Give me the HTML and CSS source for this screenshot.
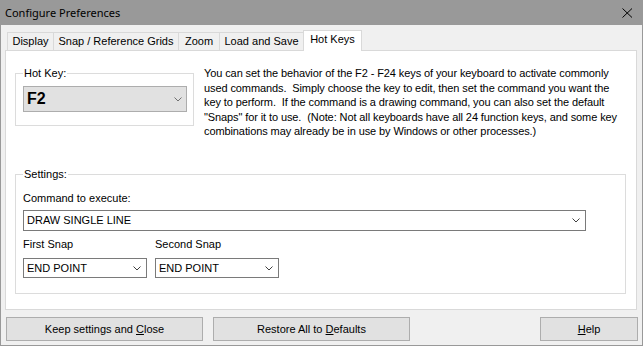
FILE: index.html
```html
<!DOCTYPE html>
<html>
<head>
<meta charset="utf-8">
<title>Configure Preferences</title>
<link rel="stylesheet" href="styles.css">
</head>
<body>
<div class="window">
  <div class="titlebar">
    <span class="title">Configure Preferences</span>
    <svg class="close" width="11" height="10" viewBox="0 0 11 10"><path d="M0.5 0.5L10 9.5M10 0.5L0.5 9.5" stroke="#000" stroke-width="1" fill="none"/></svg>
  </div>
  <div class="content">
    <div class="tabs">
      <div class="tab tab-display">Display</div>
      <div class="tab tab-snap">Snap / Reference Grids</div>
      <div class="tab tab-zoom">Zoom</div>
      <div class="tab tab-load">Load and Save</div>
      <div class="tab tab-hot active">Hot Keys</div>
    </div>
    <div class="panel">
      <div class="top-row">
        <div class="group hotkey-group">
          <div class="group-label">Hot Key:</div>
          <div class="combo combo-hotkey">
            <span class="hotkey-value">F2</span>
            <svg class="chev" width="8" height="5" viewBox="0 0 8 5"><polyline points="0.5,0.5 4,4 7.5,0.5" fill="none" stroke="#707070" stroke-width="1"/></svg>
          </div>
        </div>
        <p class="desc">You can set the behavior of the F2 - F24 keys of your keyboard to activate commonly<br>used commands.&nbsp; Simply choose the key to edit, then set the command you want the<br>key to perform.&nbsp; If the command is a drawing command, you can also set the default<br>"Snaps" for it to use.&nbsp; (Note: Not all keyboards have all 24 function keys, and some key<br>combinations may already be in use by Windows or other processes.)</p>
      </div>
      <div class="group settings-group">
        <div class="group-label">Settings:</div>
        <div class="field-label cmd-label">Command to execute:</div>
        <div class="combo combo-white combo-cmd">
          <span>DRAW SINGLE LINE</span>
          <svg class="chev" width="8" height="5" viewBox="0 0 8 5"><polyline points="0.5,0.5 4,4 7.5,0.5" fill="none" stroke="#404040" stroke-width="1"/></svg>
        </div>
        <div class="snap-row">
          <div class="snap-col">
            <div class="field-label">First Snap</div>
            <div class="combo combo-white combo-snap">
              <span>END POINT</span>
              <svg class="chev" width="8" height="5" viewBox="0 0 8 5"><polyline points="0.5,0.5 4,4 7.5,0.5" fill="none" stroke="#404040" stroke-width="1"/></svg>
            </div>
          </div>
          <div class="snap-col">
            <div class="field-label">Second Snap</div>
            <div class="combo combo-white combo-snap">
              <span>END POINT</span>
              <svg class="chev" width="8" height="5" viewBox="0 0 8 5"><polyline points="0.5,0.5 4,4 7.5,0.5" fill="none" stroke="#404040" stroke-width="1"/></svg>
            </div>
          </div>
        </div>
      </div>
    </div>
    <div class="buttons">
      <button class="btn btn-keep">Keep settings and <u>C</u>lose</button>
      <button class="btn btn-restore">Restore All to <u>D</u>efaults</button>
      <button class="btn btn-help"><u>H</u>elp</button>
    </div>
  </div>
</div>
</body>
</html>
```
FILE: styles.css
```css
* { box-sizing: border-box; }
html, body { margin: 0; padding: 0; }
body {
  width: 643px;
  height: 346px;
  overflow: hidden;
  background: #f0f0f0;
  font-family: "Liberation Sans", Arial, sans-serif;
  font-size: 11px;
  color: #000;
}
.window {
  width: 643px;
  height: 346px;
  border: 1px solid #999;
  border-top: 0;
  display: flex;
  flex-direction: column;
}
.titlebar {
  height: 25px;
  margin: 0 -1px;
  padding: 0 10px 0 5px;
  background: #999;
  display: flex;
  align-items: center;
  justify-content: space-between;
}
.title {
  font-family: "Noto Sans", "Open Sans", sans-serif;
  font-size: 11px;
  line-height: 16px;
}
.close { display: block; }
.content {
  flex: 1;
  display: flex;
  flex-direction: column;
}
.tabs {
  height: 25px;
  display: flex;
  align-items: flex-end;
  padding-left: 6px;
}
.tab {
  height: 18px;
  border: 1px solid #d9d9d9;
  border-bottom: 0;
  margin-left: -1px;
  line-height: 16px;
  text-align: center;
  white-space: nowrap;
  background: #f0f0f0;
}
.tab:first-child { margin-left: 0; }
.tab-display { width: 47px; }
.tab-snap { width: 126px; }
.tab-zoom { width: 42px; }
.tab-load { width: 85px; }
.tab-hot { width: 59px; }
.tab.active {
  height: 21px;
  margin-bottom: -1px;
  background: #fff;
  position: relative;
  z-index: 1;
}
.panel {
  margin-left: 4px;
  width: 632px;
  height: 260px;
  background: #fff;
  border: 1px solid #d9d9d9;
}
.top-row {
  height: 123px;
  display: flex;
  align-items: flex-start;
}
.group {
  border: 1px solid #dcdcdc;
  padding: 0 0 0 7px;
  margin-left: 9px;
}
.group-label {
  width: max-content;
  height: 13px;
  margin-top: -7px;
  padding: 0 1px;
  background: #fff;
  line-height: 13px;
}
.hotkey-group {
  margin-top: 22px;
  width: 179px;
  height: 53px;
  flex: none;
}
.combo {
  display: flex;
  align-items: center;
  justify-content: space-between;
}
.chev { display: block; flex: none; }
.combo-hotkey {
  margin-top: 6px;
  width: 164px;
  height: 26px;
  background: #e1e1e1;
  border: 1px solid #adadad;
  padding: 0 4px 0 3px;
}
.hotkey-value {
  font-weight: bold;
  font-size: 16px;
  line-height: 20px;
}
.desc {
  margin: 15px 0 0 10px;
  line-height: 14.5px;
  letter-spacing: -0.1px;
  white-space: nowrap;
}
.settings-group {
  width: 611px;
  height: 120px;
}
.field-label {
  height: 13px;
  line-height: 13px;
}
.cmd-label { margin-top: 11px; }
.combo-white {
  background: #fff;
  border: 1px solid #7a7a7a;
  padding: 0 5px 0 3px;
  line-height: 13px;
}
.combo-cmd {
  margin-top: 5px;
  width: 563px;
  height: 21px;
}
.snap-row {
  margin-top: 7px;
  display: grid;
  grid-template-columns: 124px 124px;
  column-gap: 8px;
}
.combo-snap {
  margin-top: 7px;
  height: 20px;
}
.buttons {
  margin-top: 7px;
  height: 24px;
  display: flex;
  padding: 0 4px 0 5px;
}
.btn {
  height: 24px;
  margin: 0;
  padding: 0;
  background: #e1e1e1;
  border: 1px solid #adadad;
  font: inherit;
  color: #000;
  line-height: 22px;
  text-align: center;
}
.btn-keep { width: 197px; }
.btn-restore { width: 197px; margin-left: 10px; }
.btn-help { width: 98px; margin-left: auto; }
```
